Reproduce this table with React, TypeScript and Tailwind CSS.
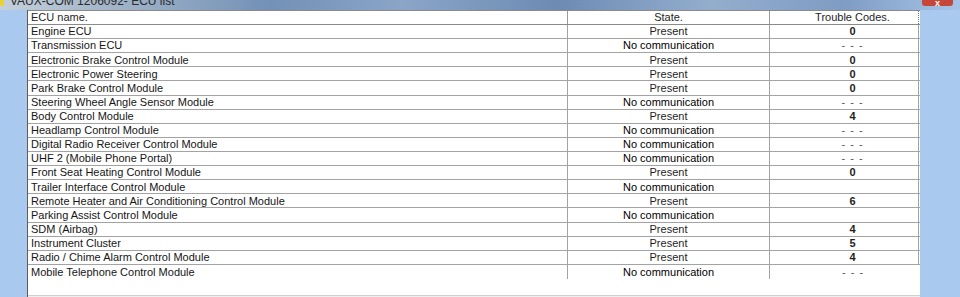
import React from 'react';

type EcuRow = {
  name: string;
  state: 'Present' | 'No communication';
  codes: string;
};

const ROWS: EcuRow[] = [
  { name: 'Engine ECU', state: 'Present', codes: '0' },
  { name: 'Transmission ECU', state: 'No communication', codes: '---' },
  { name: 'Electronic Brake Control Module', state: 'Present', codes: '0' },
  { name: 'Electronic Power Steering', state: 'Present', codes: '0' },
  { name: 'Park Brake Control Module', state: 'Present', codes: '0' },
  { name: 'Steering Wheel Angle Sensor Module', state: 'No communication', codes: '---' },
  { name: 'Body Control Module', state: 'Present', codes: '4' },
  { name: 'Headlamp Control Module', state: 'No communication', codes: '---' },
  { name: 'Digital Radio Receiver Control Module', state: 'No communication', codes: '---' },
  { name: 'UHF 2 (Mobile Phone Portal)', state: 'No communication', codes: '---' },
  { name: 'Front Seat Heating Control Module', state: 'Present', codes: '0' },
  { name: 'Trailer Interface Control Module', state: 'No communication', codes: '' },
  { name: 'Remote Heater and Air Conditioning Control Module', state: 'Present', codes: '6' },
  { name: 'Parking Assist Control Module', state: 'No communication', codes: '' },
  { name: 'SDM (Airbag)', state: 'Present', codes: '4' },
  { name: 'Instrument Cluster', state: 'Present', codes: '5' },
  { name: 'Radio / Chime Alarm Control Module', state: 'Present', codes: '4' },
  { name: 'Mobile Telephone Control Module', state: 'No communication', codes: '---' },
];

function CodesCell({ codes }: { codes: string }) {
  if (codes === '---') {
    return <span className="tracking-[1px] text-[#555]">- - -</span>;
  }
  return <span className="font-bold">{codes}</span>;
}

export default function App() {
  return (
    <div className="flex h-[297px] w-[960px] flex-col overflow-hidden bg-[#a9c9ee] font-['Liberation_Sans',Arial,sans-serif] text-[11px] text-[#1e1e1e]">
      {/* title bar */}
      <div className="flex h-[10px] shrink-0 overflow-hidden bg-[linear-gradient(90deg,#c4d0dc_0%,#a7b8cb_10%,#7391b6_28%,#8aa5c6_42%,#6d8bb3_58%,#93adcd_74%,#7f9cc2_88%,#a6c4e8_100%)]">
        <div className="h-[6px] w-[4px] shrink-0 bg-[#e8d23a]" />
        <span className="-mt-[6px] ml-[6px] text-[12px] leading-[14px] text-[#2a2a2a]">
          VAUX-COM 1206092- ECU list
        </span>
        <div className="ml-auto mr-[7px] flex h-[6px] w-[31px] items-end justify-center rounded-b-[3px] bg-[#c7463a]">
          <span className="text-[9px] leading-[6px] font-bold text-white">x</span>
        </div>
      </div>

      <div className="flex min-h-0 flex-1">
        <div className="w-[27px] shrink-0" />
        <div className="flex w-[893px] flex-col border-l border-[#5c5c5c] bg-white">
          {/* header */}
          <div className="flex h-[15px] shrink-0 border-t border-b border-[#8a8a8a]">
            <div className="flex w-[540px] items-center border-r border-[#9a9a9a] pl-[3px]">ECU name.</div>
            <div className="flex w-[202px] items-center justify-center border-r border-[#9a9a9a]">State.</div>
            <div className="flex w-[149px] items-center justify-center border-r border-dotted border-[#777] pl-[17px]">
              Trouble Codes.
            </div>
          </div>

          {ROWS.map((row, i) => {
            const last = i === ROWS.length - 1;
            return (
              <div
                key={row.name}
                className={
                  last
                    ? 'flex h-[14px] shrink-0'
                    : 'flex h-[14.12px] shrink-0 border-b border-[#a3a3a3]'
                }
              >
                <div className="flex w-[540px] items-center border-r border-[#a3a3a3] pl-[3px] whitespace-nowrap text-[#151515]">
                  {row.name}
                </div>
                <div
                  className={
                    row.state === 'Present'
                      ? 'flex w-[202px] items-center justify-center border-r border-[#a3a3a3]'
                      : 'flex w-[202px] items-center justify-center border-r border-[#a3a3a3] text-black'
                  }
                >
                  {row.state}
                </div>
                <div
                  className={
                    last
                      ? 'flex w-[149px] items-center justify-center pl-[17px]'
                      : 'flex w-[149px] items-center justify-center border-r border-[#a3a3a3] pl-[17px]'
                  }
                >
                  <CodesCell codes={row.codes} />
                </div>
              </div>
            );
          })}

          <div className="flex-1" />
          <div className="h-[2px] shrink-0 border-t border-[#d0d0d0] bg-[#efefef]" />
        </div>
        <div className="flex-1" />
      </div>
    </div>
  );
}
